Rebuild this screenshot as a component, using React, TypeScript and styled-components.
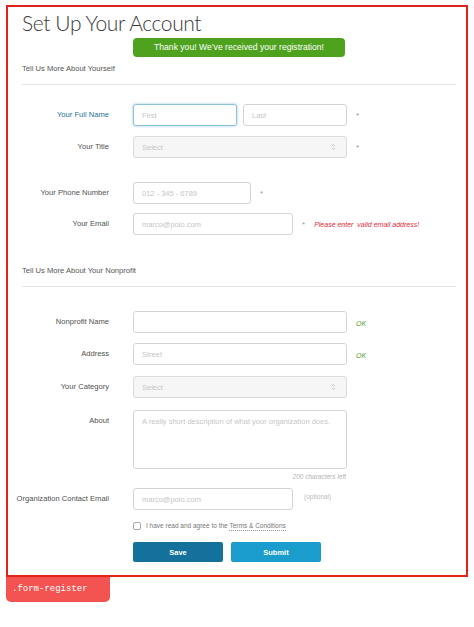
import * as React from 'react'
import styled, { createGlobalStyle } from 'styled-components'

const GlobalStyle = createGlobalStyle`
  html, body {
    margin: 0;
    padding: 0;
    background: #ffffff;
  }
  body {
    font-family: 'Liberation Sans', Arial, Helvetica, sans-serif;
    color: #555;
  }
`

const font = `'Liberation Sans', Arial, Helvetica, sans-serif`

const UpDown = () => (
  <svg width="5" height="8" viewBox="0 0 5 8">
    <path d="M1 3 L2.5 1.5 L4 3" fill="none" stroke="#c4c4c4" strokeWidth="0.9" />
    <path d="M1 5 L2.5 6.5 L4 5" fill="none" stroke="#c4c4c4" strokeWidth="0.9" />
  </svg>
)

const App = () => (
  <>
    <GlobalStyle />
    <Page>
      <Frame>
        <Title>Set Up Your Account</Title>
        <Alert>Thank you! We&rsquo;ve received your registration!</Alert>

        <SectionTitle $mt={7}>Tell Us More About Yourself</SectionTitle>

        <Row $mt={19}>
          <Label $active>Your Full Name</Label>
          <Controls>
            <Input $w={104} $focus placeholder="First" />
            <Input $w={104} placeholder="Last" />
          </Controls>
          <Required>*</Required>
        </Row>

        <Row $mt={10}>
          <Label>Your Title</Label>
          <Select $w={214}>
            <span>Select</span>
            <UpDown />
          </Select>
          <Required>*</Required>
        </Row>

        <Row $mt={24}>
          <Label>Your Phone Number</Label>
          <Input $w={118} placeholder="012 - 345 - 6789" />
          <Required>*</Required>
        </Row>

        <Row $mt={9}>
          <Label>Your Email</Label>
          <Input $w={160} placeholder="marco@polo.com" />
          <Required>*</Required>
          <ErrorText>Please enter&nbsp; valid email address!</ErrorText>
        </Row>

        <SectionTitle $mt={31}>Tell Us More About Your Nonprofit</SectionTitle>

        <Row $mt={24}>
          <Label>Nonprofit Name</Label>
          <Input $w={214} />
          <Ok>OK</Ok>
        </Row>

        <Row $mt={10}>
          <Label>Address</Label>
          <Input $w={214} placeholder="Street" />
          <Ok>OK</Ok>
        </Row>

        <Row $mt={11}>
          <Label>Your Category</Label>
          <Select $w={214}>
            <span>Select</span>
            <UpDown />
          </Select>
        </Row>

        <Row $mt={12} $top>
          <Label $pt={6}>About</Label>
          <TextArea placeholder="A really short description of what your organization does." />
        </Row>
        <Hint>200 characters left</Hint>

        <Row $mt={6}>
          <Label>Organization Contact Email</Label>
          <Input $w={160} placeholder="marco@polo.com" />
          <Optional>(optional)</Optional>
        </Row>

        <Row $mt={11}>
          <Label />
          <Agree>
            <Box />
            I have read and agree to the <Terms>Terms &amp; Conditions</Terms>
          </Agree>
        </Row>

        <Row $mt={11}>
          <Label />
          <Buttons>
            <Button $dark>Save</Button>
            <Button>Submit</Button>
          </Buttons>
        </Row>
      </Frame>
      <Tag>.form-register</Tag>
    </Page>
  </>
)

export default App

const Page = styled.div`
  padding: 5px 0 0 6px;
`

const Frame = styled.div`
  box-sizing: border-box;
  width: 462px;
  height: 572px;
  border: 2px solid #e2231a;
  padding-right: 10px;
  display: flex;
  flex-direction: column;
`

const Title = styled.h1`
  margin: 3px 0 0 14px;
  font-family: 'Lato', ${font};
  font-weight: 300;
  font-size: 21px;
  letter-spacing: -0.4px;
  line-height: 26px;
  color: #3a3a3a;
`

const Alert = styled.div`
  box-sizing: border-box;
  margin: 2px 0 0 125px;
  width: 212px;
  height: 19px;
  border-radius: 4px;
  background: #4ea21e;
  color: #ffffff;
  font-size: 8.6px;
  line-height: 19px;
  text-align: center;
`

const SectionTitle = styled.div<{ $mt: number }>`
  margin: ${(p) => p.$mt}px 0 0 14px;
  padding-bottom: 10px;
  border-bottom: 1px solid #e6e6e6;
  font-size: 7.6px;
  line-height: 10px;
  color: #555;
`

const Row = styled.div<{ $mt: number; $top?: boolean }>`
  display: flex;
  align-items: ${(p) => (p.$top ? 'flex-start' : 'center')};
  margin-top: ${(p) => p.$mt}px;
`

const Label = styled.label<{ $active?: boolean; $pt?: number }>`
  flex: none;
  width: 101px;
  margin-right: 24px;
  padding-top: ${(p) => p.$pt || 0}px;
  text-align: right;
  white-space: nowrap;
  direction: rtl;
  font-size: 7.6px;
  line-height: 10px;
  color: ${(p) => (p.$active ? '#1d6f98' : '#505050')};
`

const Controls = styled.div`
  display: flex;
  gap: 6px;
`

const Input = styled.input<{ $w: number; $focus?: boolean }>`
  box-sizing: border-box;
  width: ${(p) => p.$w}px;
  height: 22px;
  margin: 0;
  padding: 0 8px;
  border: 1px solid ${(p) => (p.$focus ? '#8cc4de' : '#d4d4d4')};
  border-radius: 3px;
  box-shadow: ${(p) => (p.$focus ? '0 0 3px rgba(80, 160, 210, 0.55)' : 'none')};
  background: #fff;
  font-family: ${font};
  font-size: 7.5px;
  color: #555;
  outline: none;
  &::placeholder {
    color: #c6c6c6;
  }
`

const Select = styled.div<{ $w: number }>`
  box-sizing: border-box;
  width: ${(p) => p.$w}px;
  height: 22px;
  padding: 0 10px 0 8px;
  display: flex;
  align-items: center;
  justify-content: space-between;
  border: 1px solid #dcdcdc;
  border-radius: 3px;
  background: #f6f6f6;
  font-size: 7.5px;
  color: #c6c6c6;
`

const TextArea = styled.textarea`
  box-sizing: border-box;
  width: 214px;
  height: 59px;
  margin: 0;
  padding: 6px 8px;
  border: 1px solid #d4d4d4;
  border-radius: 3px;
  resize: none;
  font-family: ${font};
  font-size: 7.5px;
  line-height: 10px;
  outline: none;
  &::placeholder {
    color: #c6c6c6;
  }
`

const Required = styled.span`
  margin-left: 9px;
  font-size: 8px;
  color: #999;
`

const ErrorText = styled.span`
  margin-left: 9px;
  font-size: 7px;
  font-style: italic;
  color: #e0283a;
`

const Ok = styled.span`
  margin: 2px 0 0 9px;
  font-size: 7px;
  font-style: italic;
  color: #4a9a2a;
`

const Hint = styled.div`
  width: 338px;
  margin-top: 3px;
  text-align: right;
  font-size: 6.5px;
  line-height: 10px;
  font-style: italic;
  color: #b4b4b4;
`

const Optional = styled.span`
  margin: -5px 0 0 11px;
  font-size: 6.5px;
  color: #bdbdbd;
`

const Agree = styled.div`
  display: flex;
  align-items: center;
  font-size: 6.5px;
  line-height: 10px;
  color: #777;
  white-space: pre;
`

const Box = styled.span`
  box-sizing: border-box;
  width: 8px;
  height: 8px;
  margin-right: 5px;
  border: 1px solid #a8a8a8;
  border-radius: 2px;
`

const Terms = styled.span`
  border-bottom: 1px dotted #999;
  line-height: 8px;
`

const Buttons = styled.div`
  display: flex;
  gap: 8px;
`

const Button = styled.button<{ $dark?: boolean }>`
  width: 90px;
  height: 20px;
  margin: 0;
  padding: 0;
  border: none;
  border-radius: 2px;
  background: ${(p) => (p.$dark ? '#13719c' : '#1a9ccc')};
  color: #fff;
  font-family: ${font};
  font-size: 7.5px;
  font-weight: bold;
`

const Tag = styled.div`
  box-sizing: border-box;
  width: 104px;
  height: 25px;
  padding: 0 0 0 6px;
  border-radius: 0 0 5px 5px;
  background: #f35351;
  color: #fff;
  font-family: 'Liberation Mono', 'DejaVu Sans Mono', monospace;
  font-size: 9px;
  line-height: 24px;
`
